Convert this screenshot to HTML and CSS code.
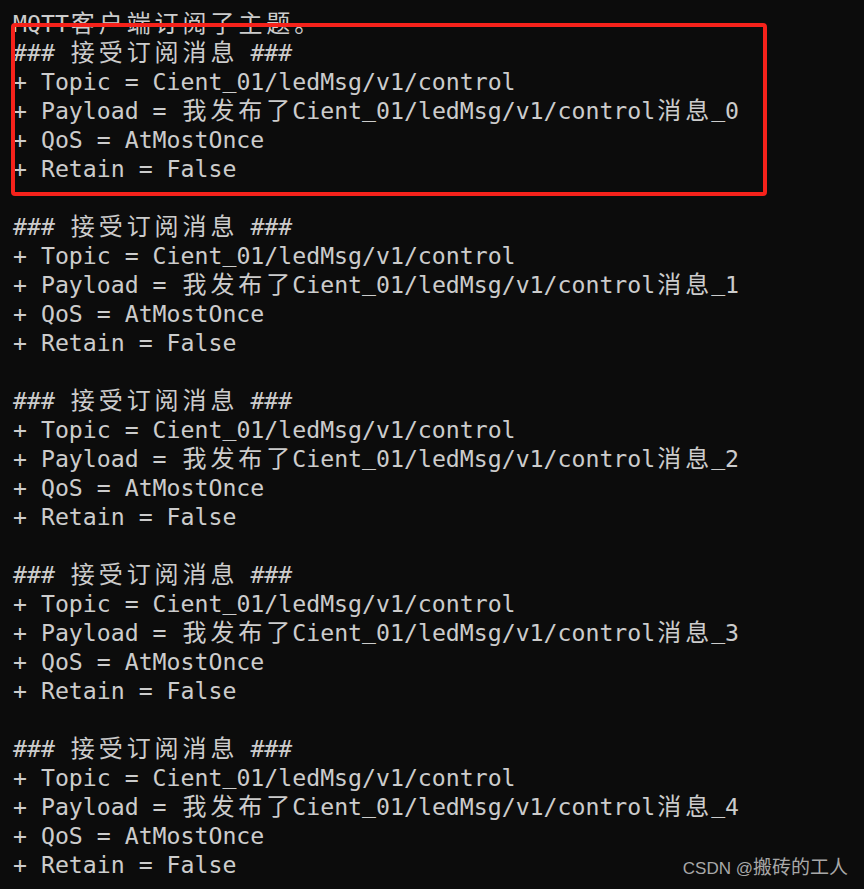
FILE: index.html
```html
<!DOCTYPE html>
<html lang="zh-CN">
<head>
  <meta charset="UTF-8" />
  <meta name="viewport" content="width=device-width, initial-scale=1.0" />
  <title>MQTT 订阅消息</title>
  <link rel="stylesheet" href="styles.css">
</head>
<body>
  <div class="term">
    <div class="line">MQTT<span class="wide">客户端订阅了主题。</span></div>

    <div class="msg highlight">
      <span class="mark"></span>
      <div class="line">### <span class="wide">接受订阅消息</span> ###</div>
      <div class="line">+ Topic = Cient<span class="us">_</span>01/ledMsg/v1/control</div>
      <div class="line">+ Payload = <span class="wide">我发布了</span>Cient<span class="us">_</span>01/ledMsg/v1/control<span class="wide">消息</span><span class="us">_</span>0</div>
      <div class="line">+ QoS = AtMostOnce</div>
      <div class="line">+ Retain = False</div>
    </div>
    <div class="line"></div>

    <div class="msg">
      <div class="line">### <span class="wide">接受订阅消息</span> ###</div>
      <div class="line">+ Topic = Cient<span class="us">_</span>01/ledMsg/v1/control</div>
      <div class="line">+ Payload = <span class="wide">我发布了</span>Cient<span class="us">_</span>01/ledMsg/v1/control<span class="wide">消息</span><span class="us">_</span>1</div>
      <div class="line">+ QoS = AtMostOnce</div>
      <div class="line">+ Retain = False</div>
    </div>
    <div class="line"></div>

    <div class="msg">
      <div class="line">### <span class="wide">接受订阅消息</span> ###</div>
      <div class="line">+ Topic = Cient<span class="us">_</span>01/ledMsg/v1/control</div>
      <div class="line">+ Payload = <span class="wide">我发布了</span>Cient<span class="us">_</span>01/ledMsg/v1/control<span class="wide">消息</span><span class="us">_</span>2</div>
      <div class="line">+ QoS = AtMostOnce</div>
      <div class="line">+ Retain = False</div>
    </div>
    <div class="line"></div>

    <div class="msg">
      <div class="line">### <span class="wide">接受订阅消息</span> ###</div>
      <div class="line">+ Topic = Cient<span class="us">_</span>01/ledMsg/v1/control</div>
      <div class="line">+ Payload = <span class="wide">我发布了</span>Cient<span class="us">_</span>01/ledMsg/v1/control<span class="wide">消息</span><span class="us">_</span>3</div>
      <div class="line">+ QoS = AtMostOnce</div>
      <div class="line">+ Retain = False</div>
    </div>
    <div class="line"></div>

    <div class="msg">
      <div class="line">### <span class="wide">接受订阅消息</span> ###</div>
      <div class="line">+ Topic = Cient<span class="us">_</span>01/ledMsg/v1/control</div>
      <div class="line">+ Payload = <span class="wide">我发布了</span>Cient<span class="us">_</span>01/ledMsg/v1/control<span class="wide">消息</span><span class="us">_</span>4</div>
      <div class="line">+ QoS = AtMostOnce</div>
      <div class="line">+ Retain = False</div>
    </div>
  </div>

  <div class="watermark">CSDN @<span class="wm-cjk">搬砖的工人</span></div>
</body>
</html>
```

FILE: styles.css
```css
html, body {
  margin: 0;
  height: 100%;
  background-color: #0c0c0c;
  overflow: hidden;
}
.term {
  padding: 9px 0 0 13px;
  font-family: "DejaVu Sans Mono", "Noto Sans CJK SC", monospace;
  font-size: 23.2px;
  color: #cccccc;
}
.line {
  height: 29px;
  line-height: 29px;
  white-space: pre;
}
/* CJK glyphs take two terminal cells */
.wide {
  font-size: 24px;
  letter-spacing: calc(2 * 0.602 * 23.2px - 1em);
  padding-left: calc(0.602 * 23.2px - 0.5em);
  margin-right: calc(0.5em - 0.602 * 23.2px);
}
/* underscore sits a bit higher in the terminal font */
.us {
  line-height: 0;
  vertical-align: 3px;
}
.highlight {
  position: relative;
}
.highlight .mark {
  position: absolute;
  left: -2px;
  top: -15px;
  width: 756px;
  height: 173px;
  box-sizing: border-box;
  border: 4px solid #f6221b;
  border-radius: 4px;
}
.watermark {
  position: absolute;
  right: 16px;
  bottom: 10px;
  font-family: "Liberation Sans", "Noto Sans CJK SC", sans-serif;
  font-size: 17px;
  line-height: 20px;
  color: #a8a8a8;
}
.wm-cjk {
  font-size: 19px;
}
```
